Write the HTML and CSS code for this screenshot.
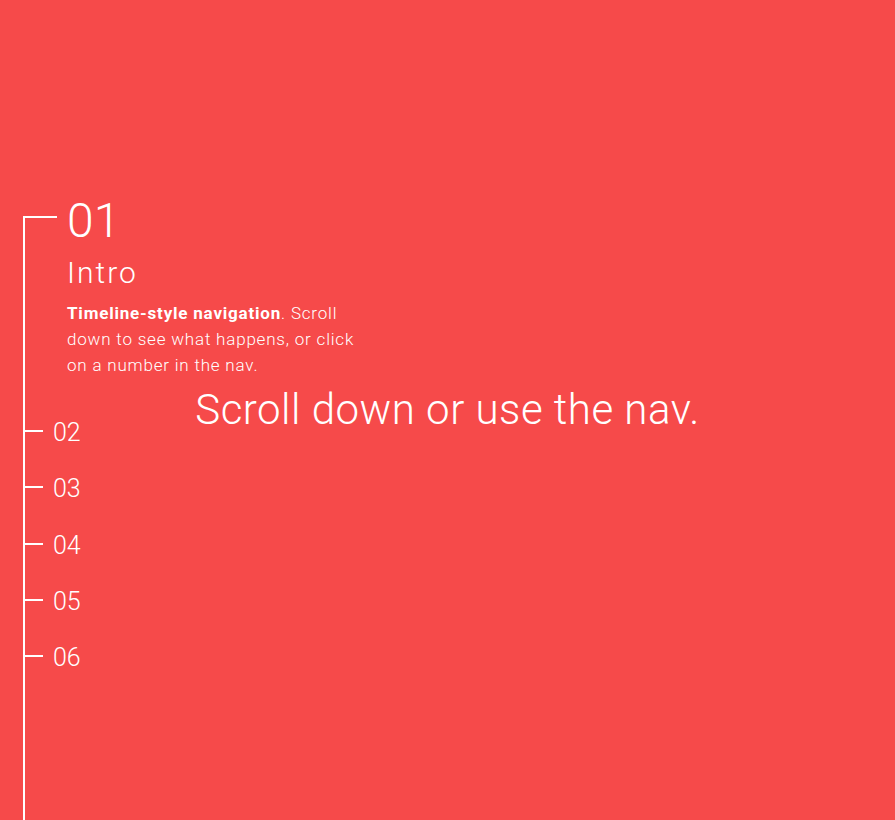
FILE: index.html
```html
<!DOCTYPE html>
<html>
<head>
  <meta name="viewport" content="width=device-width, initial-scale=1">
  <meta charset="UTF-8">
  <link rel="stylesheet" href="styles.css">
</head>
<body>
  <nav class="timeline">
    <ul>
      <li class="step active">
        <span class="num">01</span>
        <h2>Intro</h2>
        <p><strong>Timeline-style navigation</strong>. Scroll down to see what happens, or click on a number in the nav.</p>
      </li>
      <li class="step"><span class="num">02</span></li>
      <li class="step"><span class="num">03</span></li>
      <li class="step"><span class="num">04</span></li>
      <li class="step"><span class="num">05</span></li>
      <li class="step"><span class="num">06</span></li>
    </ul>
  </nav>
  <main class="content">
    <h1>Scroll down or use the nav.</h1>
  </main>
</body>
</html>
```

FILE: styles.css
```css
html, body {
  height: 100%;
  margin: 0;
  padding: 0;
}

body {
  background-color: #f64a4a;
  color: #FFFFFF;
  font-family: "Roboto Slab", Roboto, "Noto Sans", sans-serif;
  font-weight: 300;
  overflow: hidden;
}

.content {
  height: 100%;
  display: flex;
  align-items: center;
  justify-content: center;
}

.content h1 {
  margin: 0;
  font-size: 42px;
  font-weight: 300;
  line-height: 1;
  letter-spacing: 0.5px;
}

/* the nav sits over the page, a line down the left edge */
.timeline {
  position: absolute;
  top: 216px;
  left: 23px;
  bottom: 0;
  border-left: 2px solid #FFFFFF;
}

.timeline ul {
  list-style: none;
  margin: 0;
  padding: 0;
}

.step {
  position: relative;
  height: 56.25px;
  padding-left: 28px;
}

.step::before {
  content: "";
  position: absolute;
  left: 0;
  top: 27px;
  width: 18px;
  height: 2px;
  background-color: #FFFFFF;
}

.step .num {
  display: block;
  font-size: 25px;
  line-height: 56px;
  position: relative;
  top: 2px;
}

.step.active {
  height: auto;
  margin-top: -19px;
  margin-bottom: 25px;
  padding-left: 42px;
}

.step.active::before {
  left: -2px;
  top: 19px;
  width: 34px;
}

.step.active .num {
  font-size: 48px;
  line-height: 48px;
  top: 0;
}

.step.active h2 {
  margin: 10px 0 0;
  font-size: 30px;
  font-weight: 300;
  line-height: 36px;
  letter-spacing: 2px;
}

.step.active p {
  width: 300px;
  margin: 9px 0 0;
  font-size: 17px;
  line-height: 26px;
  letter-spacing: 0.8px;
}

.step.active strong {
  font-weight: 700;
}
```
